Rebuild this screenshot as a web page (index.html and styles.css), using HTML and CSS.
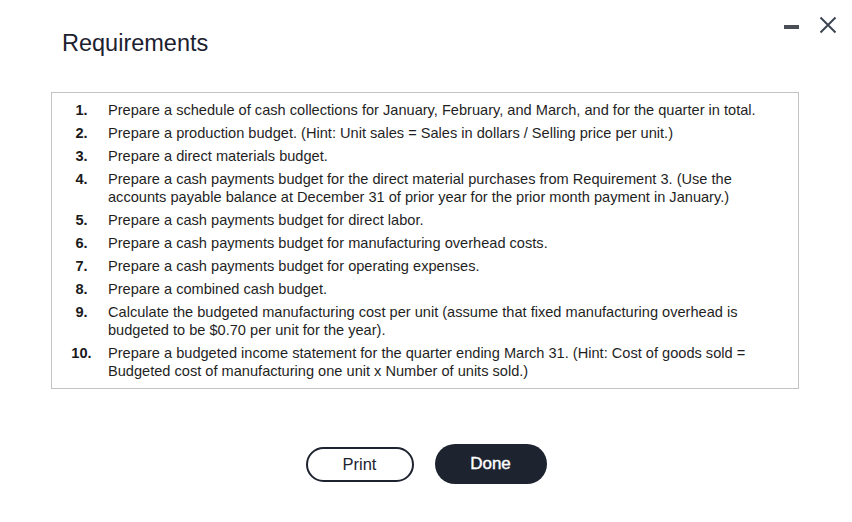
FILE: index.html
```html
<!DOCTYPE html>
<html lang="en">
<head>
<meta charset="utf-8">
<title>Requirements</title>
<link rel="stylesheet" href="styles.css">
</head>
<body>
<div class="dialog">
  <div class="controls">
    <button class="ctl" aria-label="Minimize">
      <svg width="16" height="18" viewBox="0 0 16 18"><rect x="0" y="9" width="15" height="4" fill="#4a4f57"/></svg>
    </button>
    <button class="ctl" aria-label="Close">
      <svg width="18" height="18" viewBox="0 0 18 18"><path d="M1.5 1.5 L16.5 16.5 M16.5 1.5 L1.5 16.5" stroke="#3d4652" stroke-width="2" fill="none"/></svg>
    </button>
  </div>
  <h1 class="title">Requirements</h1>
  <ol class="req-list">
    <li class="req"><span class="num">1.</span><span class="txt">Prepare a schedule of cash collections for January, February, and March, and for the quarter in total.</span></li>
    <li class="req"><span class="num">2.</span><span class="txt">Prepare a production budget. (Hint: Unit sales = Sales in dollars / Selling price per unit.)</span></li>
    <li class="req"><span class="num">3.</span><span class="txt">Prepare a direct materials budget.</span></li>
    <li class="req"><span class="num">4.</span><span class="txt">Prepare a cash payments budget for the direct material purchases from Requirement 3. (Use the accounts payable balance at December 31 of prior year for the prior month payment in January.)</span></li>
    <li class="req"><span class="num">5.</span><span class="txt">Prepare a cash payments budget for direct labor.</span></li>
    <li class="req"><span class="num">6.</span><span class="txt">Prepare a cash payments budget for manufacturing overhead costs.</span></li>
    <li class="req"><span class="num">7.</span><span class="txt">Prepare a cash payments budget for operating expenses.</span></li>
    <li class="req"><span class="num">8.</span><span class="txt">Prepare a combined cash budget.</span></li>
    <li class="req"><span class="num">9.</span><span class="txt">Calculate the budgeted manufacturing cost per unit (assume that fixed manufacturing overhead is budgeted to be $0.70 per unit for the year).</span></li>
    <li class="req"><span class="num">10.</span><span class="txt">Prepare a budgeted income statement for the quarter ending March 31. (Hint: Cost of goods sold = Budgeted cost of manufacturing one unit x Number of units sold.)</span></li>
  </ol>
  <div class="actions">
    <button class="btn btn-outline">Print</button>
    <button class="btn btn-solid">Done</button>
  </div>
</div>
</body>
</html>
```
FILE: styles.css
```css
* { box-sizing: border-box; }
html, body { margin: 0; padding: 0; background: #fff; }
body {
  font-family: "Liberation Sans", Arial, sans-serif;
  color: #1f1f1f;
  width: 852px;
  height: 522px;
  overflow: hidden;
}
.dialog {
  position: relative;
  padding: 30px 0 0 51px;
}
.controls {
  position: absolute;
  top: 16px;
  right: 15px;
  display: flex;
  gap: 19px;
  align-items: center;
}
.ctl {
  border: 0;
  background: none;
  padding: 0;
  margin: 0;
  display: block;
  line-height: 0;
}
.title {
  margin: 0 0 35px 11px;
  font-size: 23.5px;
  line-height: 27px;
  font-weight: normal;
  color: #1c2130;
}
.req-list {
  list-style: none;
  margin: 0;
  width: 748px;
  border: 1px solid #c4c4c4;
  padding: 8px 14px 8px 11px;
  display: flex;
  flex-direction: column;
  gap: 5px;
}
.req {
  display: grid;
  grid-template-columns: 37px 1fr;
  column-gap: 8px;
  font-size: 14.6px;
  line-height: 18px;
}
.num {
  font-weight: bold;
  text-align: center;
  color: #1a1a1a;
}
.txt { color: #1f1f1f; }
.actions {
  display: flex;
  justify-content: center;
  align-items: center;
  gap: 21px;
  margin-top: 55px;
  margin-left: -51px;
}
.btn {
  font-family: "Liberation Sans", Arial, sans-serif;
  font-size: 16px;
  border-radius: 20px;
  padding: 0;
  cursor: pointer;
}
.btn-outline {
  width: 108px;
  height: 35px;
  border: 2px solid #1e2330;
  background: #fff;
  color: #1e2330;
  font-size: 16.5px;
}
.btn-solid {
  width: 112px;
  height: 40px;
  border: 0;
  background: #1e2330;
  color: #fff;
  font-size: 17px;
  font-weight: normal;
  -webkit-text-stroke: 0.4px #fff;
}
```
